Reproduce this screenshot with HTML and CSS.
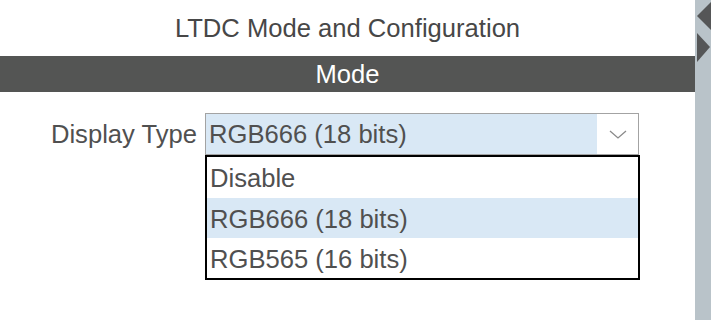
FILE: index.html
```html
<!DOCTYPE html>
<html>
<head>
<meta charset="utf-8">
<link rel="stylesheet" href="styles.css">
</head>
<body>
<div class="app">
  <div class="main">
    <div class="title">LTDC Mode and Configuration</div>
    <div class="bar">Mode</div>
    <div class="row">
      <div class="label">Display Type</div>
      <div class="field">
        <div class="select">
          <div class="value">RGB666 (18 bits)</div>
          <div class="arrow">
            <svg width="18" height="9" viewBox="0 0 18 9"><path d="M1 1 L9 8 L17 1" fill="none" stroke="#8a8a8a" stroke-width="1.3"/></svg>
          </div>
        </div>
        <div class="menu">
          <div class="item">Disable</div>
          <div class="item selected">RGB666 (18 bits)</div>
          <div class="item">RGB565 (16 bits)</div>
        </div>
      </div>
    </div>
  </div>
  <div class="strip">
    <svg width="16" height="64" viewBox="0 0 16 64">
      <polygon points="2,16 16,2 16,30" fill="#555657"/>
      <polygon points="2,33 15,47 2,62" fill="#555657"/>
    </svg>
  </div>
</div>
</body>
</html>
```

FILE: styles.css
```css
html, body {
  margin: 0;
  padding: 0;
  background: #ffffff;
}
body {
  font-family: "Liberation Sans", Arial, sans-serif;
  font-size: 25.6px;
  color: #505050;
}
.app {
  display: flex;
  width: 716px;
  height: 321px;
  overflow: hidden;
}
.main {
  width: 695px;
  flex: none;
}
.title {
  height: 56px;
  line-height: 56px;
  text-align: center;
  color: #474747;
}
.bar {
  height: 36px;
  line-height: 37px;
  background: #545554;
  color: #ffffff;
  text-align: center;
}
.row {
  display: flex;
  margin-top: 21px;
}
.label {
  width: 197px;
  box-sizing: border-box;
  text-align: right;
  line-height: 43px;
  margin-right: 8px;
}
.field {
  position: relative;
  width: 434px;
}
.select {
  display: flex;
  height: 42px;
  box-sizing: border-box;
  border: 1px solid #a3a3a3;
  background: #ffffff;
}
.value {
  width: 391px;
  background: #d9e8f5;
  line-height: 41px;
  padding-left: 3px;
  box-sizing: border-box;
}
.arrow {
  flex: 1;
  display: flex;
  align-items: center;
  justify-content: center;
}
.menu {
  position: absolute;
  left: 0;
  top: 42px;
  width: 435px;
  height: 125px;
  box-sizing: border-box;
  border: 2px solid #000000;
  background: #ffffff;
}
.item {
  height: 40px;
  line-height: 42px;
  padding-left: 3px;
}
.item:first-child {
  height: 41px;
}
.item.selected {
  background: #d9e8f5;
}
.strip {
  width: 16px;
  height: 320px;
  flex: none;
  background: #b9c3c9;
}
.strip svg {
  display: block;
}
```
